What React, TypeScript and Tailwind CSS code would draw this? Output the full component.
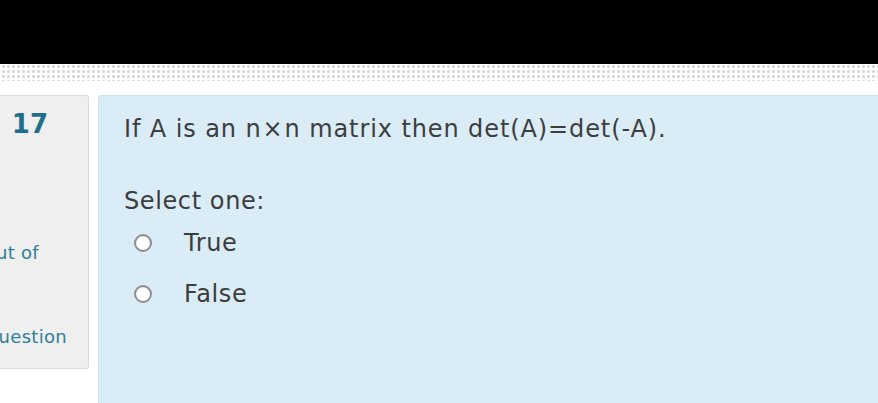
export default function App() {
  return (
    <div className="h-[403px] w-[878px] overflow-hidden bg-white font-[family-name:'DejaVu_Sans',Verdana,sans-serif]">
      <div className="h-[64px] bg-black" />
      <div className="h-[17px] bg-white bg-[radial-gradient(circle,#d6d6d6_1.2px,transparent_1.8px)] bg-[length:5px_5px] bg-[position:1px_0px]" />
      <div className="h-[14px]" />

      <div className="flex items-start gap-[9px]">
        {/* question info block, clipped on the left */}
        <div className="h-[274px] w-[89px] shrink-0 rounded-r-[3px] border border-l-0 border-[#dadada] bg-[#efefef] text-[#2f7f98]">
          <div className="mt-[12px] flex w-[48px] justify-end gap-[14px] overflow-hidden whitespace-nowrap text-[26px] font-bold leading-[32px] text-[#1f6f8b]">
            <span>Question</span>
            <span>17</span>
          </div>
          <div className="mt-[101px] flex w-[39px] justify-end overflow-hidden whitespace-nowrap text-[18px] tracking-[0.3px] leading-[24px]">
            <span>Marked out of</span>
          </div>
          <div className="mt-[60px] flex w-[67px] justify-end overflow-hidden whitespace-nowrap text-[18px] tracking-[0.3px] leading-[24px]">
            <span>Flag question</span>
          </div>
        </div>

        {/* question content */}
        <div className="h-[320px] flex-1 rounded-tl-[3px] border border-r-0 border-b-0 border-[#cce3ee] bg-[#daecf6] pl-[25px] pt-[18px] text-[24px] tracking-[0.6px] text-[#3d3d3d]">
          <p className="leading-[30px] tracking-[0.9px]">
            If A is an n<span className="px-[1px]">×</span>n matrix then det(A)=det(-A).
          </p>
          <p className="mt-[42px] leading-[30px]">Select one:</p>
          <div className="mt-[12px] flex flex-col gap-[21px]">
            {["True", "False"].map((label) => (
              <label key={label} className="flex items-center leading-[30px]">
                <span className="ml-[10px] h-[18px] w-[18px] rounded-full border-2 border-[#8e8e8e] bg-white shadow-[inset_0_1px_1px_rgba(0,0,0,0.12)]" />
                <span className="ml-[32px]">{label}</span>
              </label>
            ))}
          </div>
        </div>
      </div>
    </div>
  );
}
